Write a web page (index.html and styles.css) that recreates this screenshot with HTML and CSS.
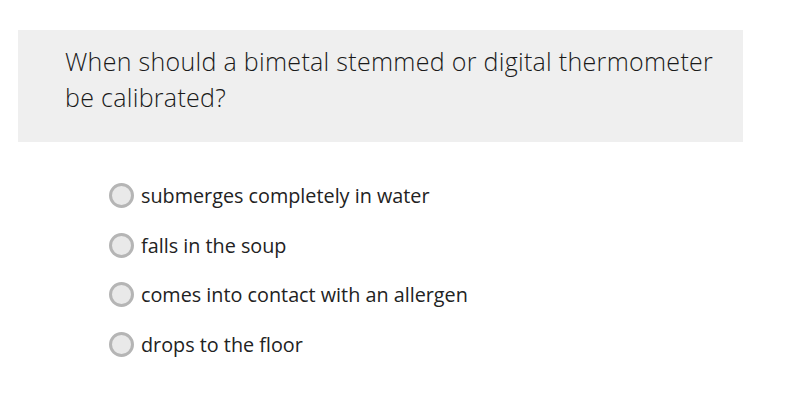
FILE: index.html
```html
<!DOCTYPE html>
<html>
<head>
<meta charset="utf-8">
<link rel="stylesheet" href="styles.css">
</head>
<body>
<div class="page">
  <div class="question">
    <p class="qtext">When should a bimetal stemmed or digital thermometer be calibrated?</p>
  </div>
  <ul class="options">
    <li class="option"><span class="radio"></span><span class="label">submerges completely in water</span></li>
    <li class="option"><span class="radio"></span><span class="label">falls in the soup</span></li>
    <li class="option"><span class="radio"></span><span class="label">comes into contact with an allergen</span></li>
    <li class="option"><span class="radio"></span><span class="label">drops to the floor</span></li>
  </ul>
</div>
</body>
</html>
```
FILE: styles.css
```css
html, body {
  margin: 0;
  padding: 0;
  background: #ffffff;
}
.page {
  padding: 30px 0 0 18px;
  width: 725px;
}
.question {
  background: #efefef;
  height: 112px;
  box-sizing: border-box;
  padding: 13px 0 0 47px;
}
.qtext {
  margin: 0;
  max-width: 660px;
  font-family: "Open Sans", sans-serif;
  font-weight: 300;
  font-size: 25px;
  line-height: 36px;
  color: #1a1a1a;
  letter-spacing: 0.3px;
}
.options {
  list-style: none;
  margin: 0;
  padding: 41px 0 0 91px;
  display: flex;
  flex-direction: column;
  gap: 24.5px;
}
.option {
  display: flex;
  align-items: center;
  gap: 7px;
  height: 25px;
}
.radio {
  width: 19px;
  height: 19px;
  border-radius: 50%;
  border: 3px solid #b5b5b5;
  background: #e9e9e9;
  flex: none;
}
.label {
  font-family: "Open Sans", sans-serif;
  font-size: 19.8px;
  color: #222222;
}
```
